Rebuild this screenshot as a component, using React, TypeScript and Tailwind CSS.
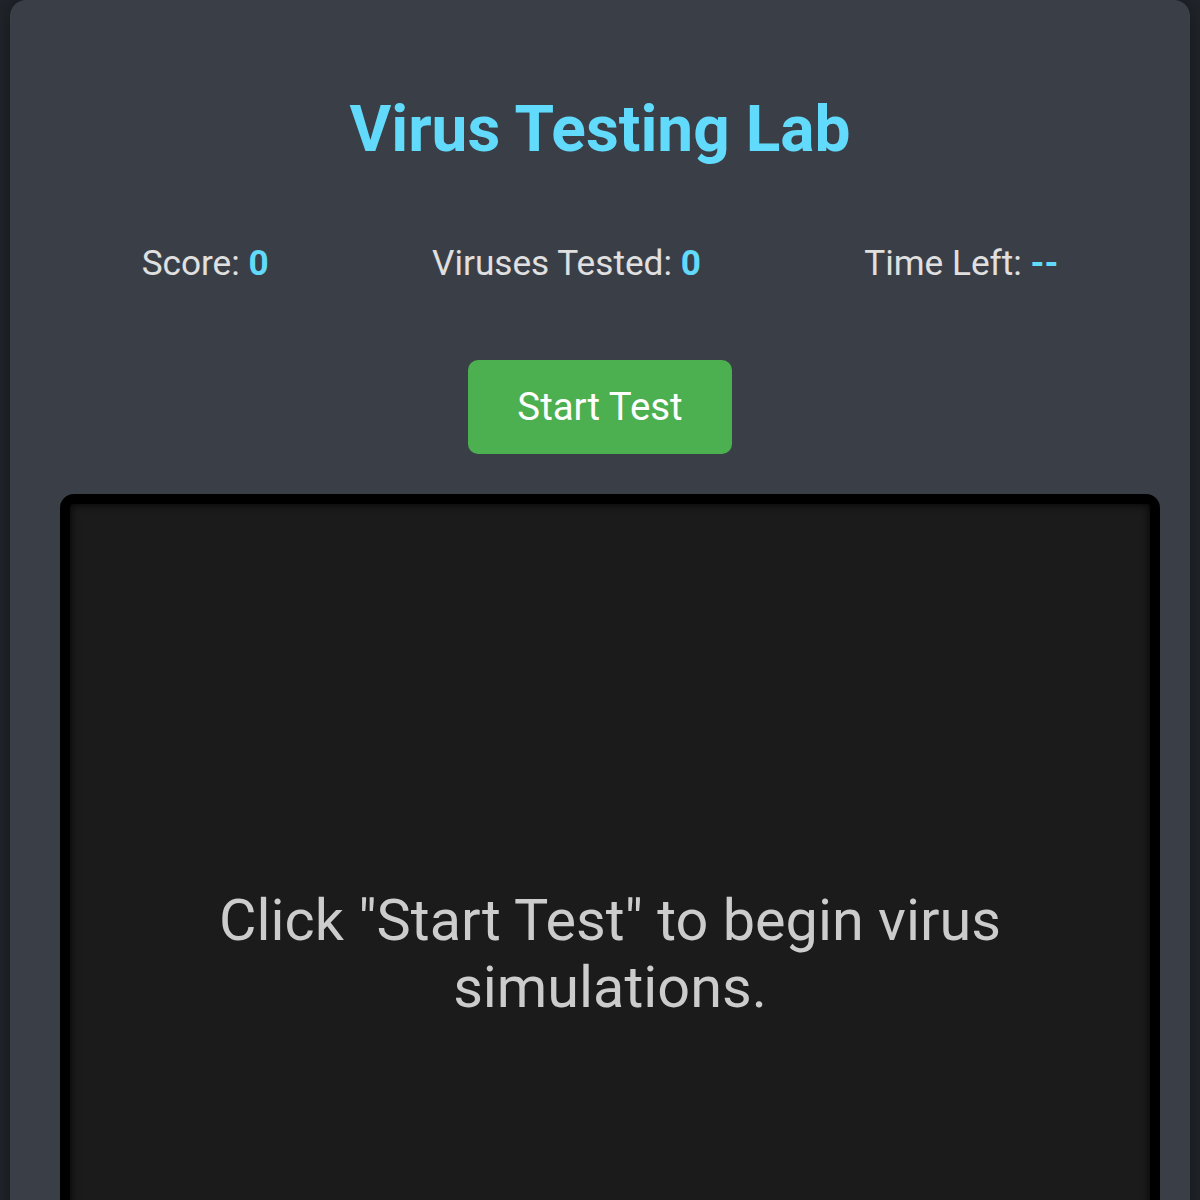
export default function App() {
  const stats = [
    { label: "Score:", value: "0" },
    { label: "Viruses Tested:", value: "0" },
    { label: "Time Left:", value: "--" },
  ];

  return (
    <div className="min-h-[1200px] bg-[#21252b] px-[10px] font-['Roboto','Liberation_Sans',sans-serif]">
      <div className="rounded-[16px] bg-[#3a3f47] px-[50px] pt-[92px] pb-[40px] shadow-[0_0_20px_rgba(0,0,0,0.4)]">
        <h1 className="text-center text-[64px] font-bold leading-[75px] text-[#61dafb]">
          Virus Testing Lab
        </h1>

        {/* stats row */}
        <div className="mt-[76px] flex justify-around text-[35.2px] leading-[41px] text-[#e0e0e0]">
          {stats.map((s) => (
            <div key={s.label}>
              {s.label} <span className="font-bold text-[#61dafb]">{s.value}</span>
            </div>
          ))}
        </div>

        <div className="mt-[76px] flex justify-center">
          <button className="h-[94px] w-[264px] rounded-[10px] bg-[#4caf50] text-[38.4px] text-white">
            Start Test
          </button>
        </div>

        {/* game area: content-box, so the border pushes it past the right padding */}
        <div className="mt-[40px] box-content flex h-[900px] w-full items-center justify-center rounded-[14px] border-[10px] border-black bg-[#1b1b1b] shadow-[inset_0_0_10px_rgba(0,0,0,0.9)]">
          <p className="px-[20px] text-center text-[57.6px] leading-[67.5px] text-[#cccccc]">
            Click "Start Test" to begin virus simulations.
          </p>
        </div>
      </div>
    </div>
  );
}
